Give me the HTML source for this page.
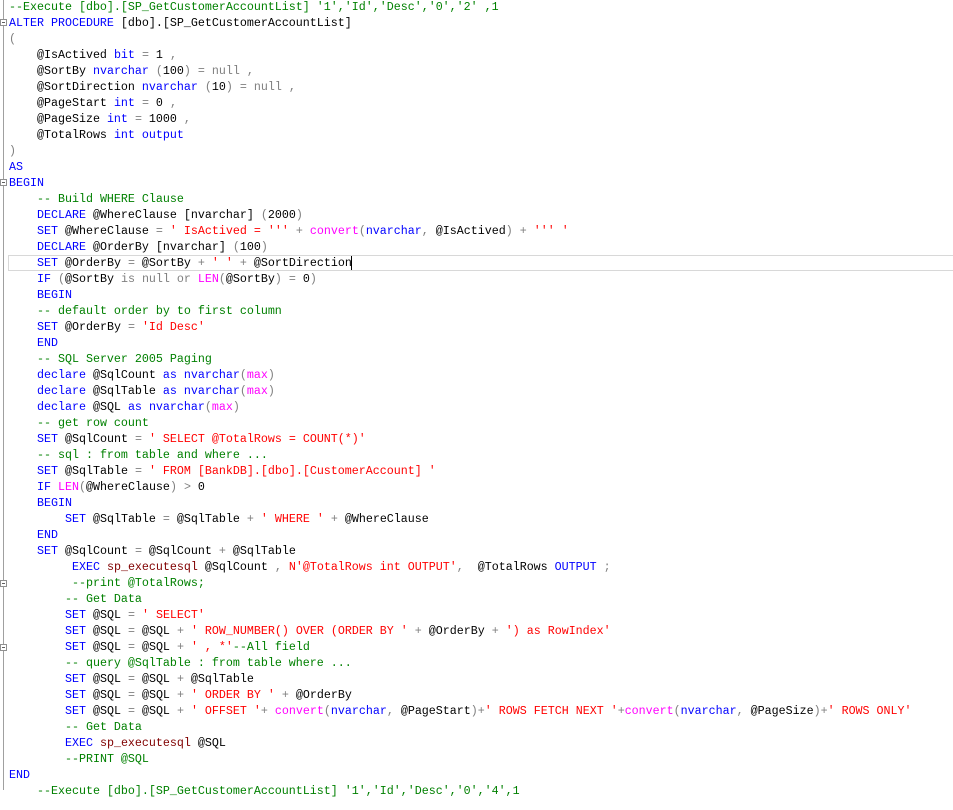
<!DOCTYPE html>
<html><head><meta charset="utf-8"><style>
html,body{margin:0;padding:0;background:#fff;width:953px;height:810px;overflow:hidden}
#code{position:absolute;left:9px;top:-1px;font-family:"Liberation Mono",monospace;font-size:11.67px;line-height:16px;white-space:pre;color:#000}
.k{color:#0000ff}.c{color:#008000}.s{color:#ff0000}.g{color:#808080}.m{color:#ff00ff}.d{color:#800000}
#gut{position:absolute;left:3px;top:0;width:1px;height:790px;background:#a0a0a0}
.fb{position:absolute;left:0;width:7px;height:7px;border:1px solid #909090;background:#fff;box-sizing:border-box}
.fb:after{content:"";position:absolute;left:1px;top:2px;width:3px;height:1px;background:#606060}
#cur{position:absolute;left:8px;top:255px;width:960px;height:16px;border:1px solid #d8d8d8;box-sizing:border-box}
#caret{position:absolute;left:351px;top:256px;width:1px;height:14px;background:#000}
</style></head><body>
<div id="gut"></div>
<div class="fb" style="top:19px"></div>
<div class="fb" style="top:179px"></div>
<div class="fb" style="top:580px"></div>
<div class="fb" style="top:644px"></div>
<div id="cur"></div>
<div id="caret"></div>
<div id="code"><span class="c">--Execute [dbo].[SP_GetCustomerAccountList] '1','Id','Desc','0','2' ,1</span>
<span class="k">ALTER PROCEDURE</span> [dbo].[SP_GetCustomerAccountList]
<span class="g">(</span>
    @IsActived <span class="k">bit</span> <span class="g">=</span> 1 <span class="g">,</span>
    @SortBy <span class="k">nvarchar</span> <span class="g">(</span>100<span class="g">)</span> <span class="g">= null ,</span>
    @SortDirection <span class="k">nvarchar</span> <span class="g">(</span>10<span class="g">)</span> <span class="g">= null ,</span>
    @PageStart <span class="k">int</span> <span class="g">=</span> 0 <span class="g">,</span>
    @PageSize <span class="k">int</span> <span class="g">=</span> 1000 <span class="g">,</span>
    @TotalRows <span class="k">int output</span>
<span class="g">)</span>
<span class="k">AS</span>
<span class="k">BEGIN</span>
    <span class="c">-- Build WHERE Clause</span>
    <span class="k">DECLARE</span> @WhereClause [nvarchar] <span class="g">(</span>2000<span class="g">)</span>
    <span class="k">SET</span> @WhereClause <span class="g">=</span> <span class="s">' IsActived = '''</span> <span class="g">+</span> <span class="m">convert</span><span class="g">(</span><span class="k">nvarchar</span><span class="g">,</span> @IsActived<span class="g">)</span> <span class="g">+</span> <span class="s">''' '</span>
    <span class="k">DECLARE</span> @OrderBy [nvarchar] <span class="g">(</span>100<span class="g">)</span>
    <span class="k">SET</span> @OrderBy <span class="g">=</span> @SortBy <span class="g">+</span> <span class="s">' '</span> <span class="g">+</span> @SortDirection
    <span class="k">IF</span> <span class="g">(</span>@SortBy <span class="g">is null or</span> <span class="m">LEN</span><span class="g">(</span>@SortBy<span class="g">)</span> <span class="g">=</span> 0<span class="g">)</span>
    <span class="k">BEGIN</span>
    <span class="c">-- default order by to first column</span>
    <span class="k">SET</span> @OrderBy <span class="g">=</span> <span class="s">'Id Desc'</span>
    <span class="k">END</span>
    <span class="c">-- SQL Server 2005 Paging</span>
    <span class="k">declare</span> @SqlCount <span class="k">as</span> <span class="k">nvarchar</span><span class="g">(</span><span class="m">max</span><span class="g">)</span>
    <span class="k">declare</span> @SqlTable <span class="k">as</span> <span class="k">nvarchar</span><span class="g">(</span><span class="m">max</span><span class="g">)</span>
    <span class="k">declare</span> @SQL <span class="k">as</span> <span class="k">nvarchar</span><span class="g">(</span><span class="m">max</span><span class="g">)</span>
    <span class="c">-- get row count</span>
    <span class="k">SET</span> @SqlCount <span class="g">=</span> <span class="s">' SELECT @TotalRows = COUNT(*)'</span>
    <span class="c">-- sql : from table and where ...</span>
    <span class="k">SET</span> @SqlTable <span class="g">=</span> <span class="s">' FROM [BankDB].[dbo].[CustomerAccount] '</span>
    <span class="k">IF</span> <span class="m">LEN</span><span class="g">(</span>@WhereClause<span class="g">)</span> <span class="g">&gt;</span> 0
    <span class="k">BEGIN</span>
        <span class="k">SET</span> @SqlTable <span class="g">=</span> @SqlTable <span class="g">+</span> <span class="s">' WHERE '</span> <span class="g">+</span> @WhereClause
    <span class="k">END</span>
    <span class="k">SET</span> @SqlCount <span class="g">=</span> @SqlCount <span class="g">+</span> @SqlTable
         <span class="k">EXEC</span> <span class="d">sp_executesql</span> @SqlCount <span class="g">,</span> <span class="s">N'@TotalRows int OUTPUT'</span><span class="g">,</span>  @TotalRows <span class="k">OUTPUT</span> <span class="g">;</span>
         <span class="c">--print @TotalRows;</span>
        <span class="c">-- Get Data</span>
        <span class="k">SET</span> @SQL <span class="g">=</span> <span class="s">' SELECT'</span>
        <span class="k">SET</span> @SQL <span class="g">=</span> @SQL <span class="g">+</span> <span class="s">' ROW_NUMBER() OVER (ORDER BY '</span> <span class="g">+</span> @OrderBy <span class="g">+</span> <span class="s">') as RowIndex'</span>
        <span class="k">SET</span> @SQL <span class="g">=</span> @SQL <span class="g">+</span> <span class="s">' , *'</span><span class="c">--All field</span>
        <span class="c">-- query @SqlTable : from table where ...</span>
        <span class="k">SET</span> @SQL <span class="g">=</span> @SQL <span class="g">+</span> @SqlTable
        <span class="k">SET</span> @SQL <span class="g">=</span> @SQL <span class="g">+</span> <span class="s">' ORDER BY '</span> <span class="g">+</span> @OrderBy
        <span class="k">SET</span> @SQL <span class="g">=</span> @SQL <span class="g">+</span> <span class="s">' OFFSET '</span><span class="g">+</span> <span class="m">convert</span><span class="g">(</span><span class="k">nvarchar</span><span class="g">,</span> @PageStart<span class="g">)+</span><span class="s">' ROWS FETCH NEXT '</span><span class="g">+</span><span class="m">convert</span><span class="g">(</span><span class="k">nvarchar</span><span class="g">,</span> @PageSize<span class="g">)+</span><span class="s">' ROWS ONLY'</span>
        <span class="c">-- Get Data</span>
        <span class="k">EXEC</span> <span class="d">sp_executesql</span> @SQL
        <span class="c">--PRINT @SQL</span>
<span class="k">END</span>
    <span class="c">--Execute [dbo].[SP_GetCustomerAccountList] '1','Id','Desc','0','4',1</span></div>
</body></html>
